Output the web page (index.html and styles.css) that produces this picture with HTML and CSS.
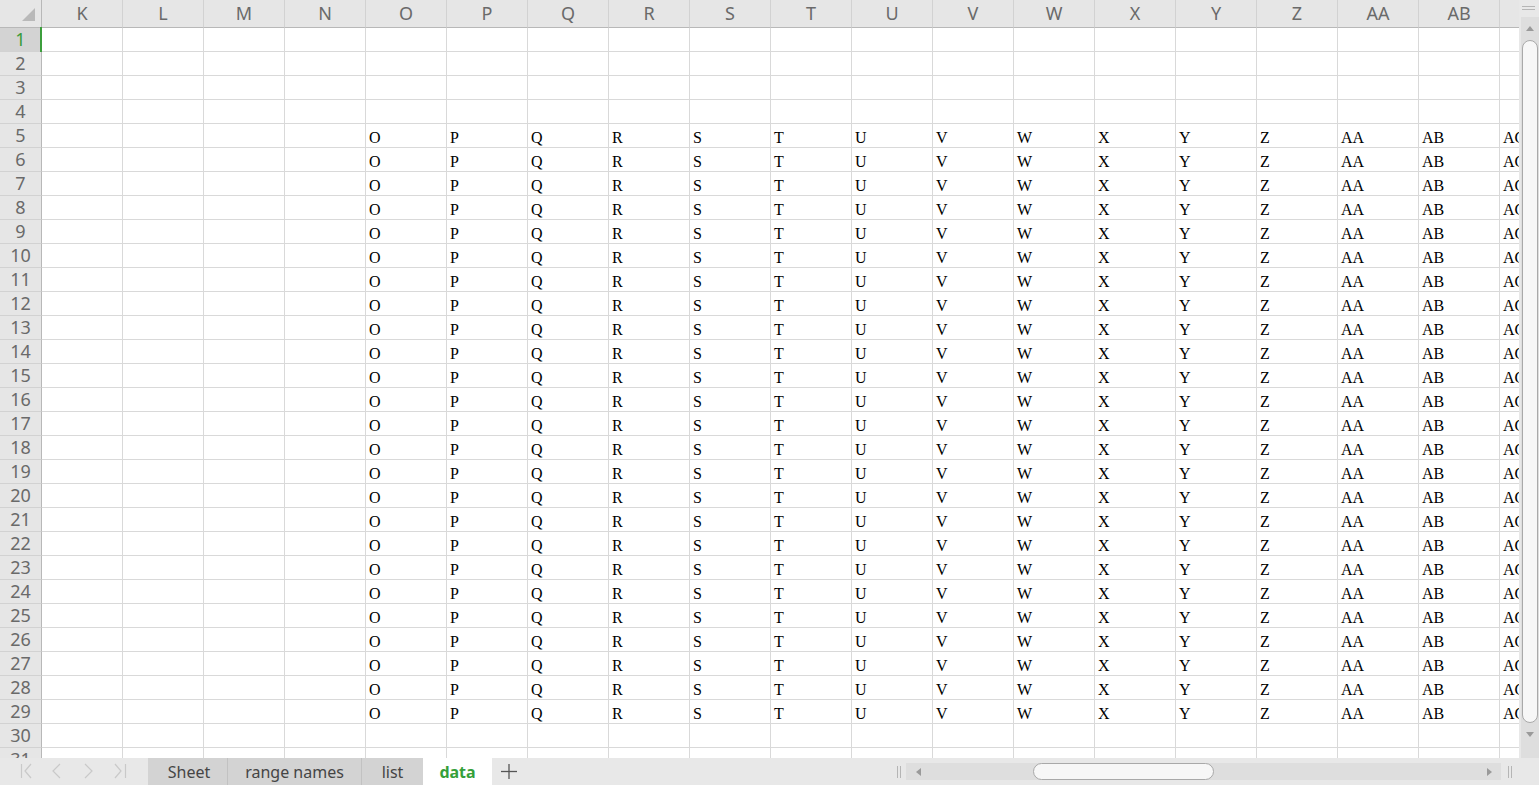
FILE: index.html
```html
<!DOCTYPE html>
<html>
<head>
<meta charset="utf-8">
<link rel="stylesheet" href="styles.css">
</head>
<body>
<div class="app">
  <div class="main">
    <div class="sheet">
      <div class="grid">
        <div class="corner"><svg width="41" height="27" viewBox="0 0 41 27"><polygon points="35,8 35,21 22,21" fill="#b9b9b9"/></svg></div>
        <div class="ch">K</div><div class="ch">L</div><div class="ch">M</div><div class="ch">N</div><div class="ch">O</div><div class="ch">P</div><div class="ch">Q</div><div class="ch">R</div><div class="ch">S</div><div class="ch">T</div><div class="ch">U</div><div class="ch">V</div><div class="ch">W</div><div class="ch">X</div><div class="ch">Y</div><div class="ch">Z</div><div class="ch">AA</div><div class="ch">AB</div><div class="ch">AC</div>
        <div class="rh act">1</div><div></div><div></div><div></div><div></div><div></div><div></div><div></div><div></div><div></div><div></div><div></div><div></div><div></div><div></div><div></div><div></div><div></div><div></div><div></div>
        <div class="rh">2</div><div></div><div></div><div></div><div></div><div></div><div></div><div></div><div></div><div></div><div></div><div></div><div></div><div></div><div></div><div></div><div></div><div></div><div></div><div></div>
        <div class="rh">3</div><div></div><div></div><div></div><div></div><div></div><div></div><div></div><div></div><div></div><div></div><div></div><div></div><div></div><div></div><div></div><div></div><div></div><div></div><div></div>
        <div class="rh">4</div><div></div><div></div><div></div><div></div><div></div><div></div><div></div><div></div><div></div><div></div><div></div><div></div><div></div><div></div><div></div><div></div><div></div><div></div><div></div>
        <div class="rh">5</div><div></div><div></div><div></div><div></div><div>O</div><div>P</div><div>Q</div><div>R</div><div>S</div><div>T</div><div>U</div><div>V</div><div>W</div><div>X</div><div>Y</div><div>Z</div><div>AA</div><div>AB</div><div>AC</div>
        <div class="rh">6</div><div></div><div></div><div></div><div></div><div>O</div><div>P</div><div>Q</div><div>R</div><div>S</div><div>T</div><div>U</div><div>V</div><div>W</div><div>X</div><div>Y</div><div>Z</div><div>AA</div><div>AB</div><div>AC</div>
        <div class="rh">7</div><div></div><div></div><div></div><div></div><div>O</div><div>P</div><div>Q</div><div>R</div><div>S</div><div>T</div><div>U</div><div>V</div><div>W</div><div>X</div><div>Y</div><div>Z</div><div>AA</div><div>AB</div><div>AC</div>
        <div class="rh">8</div><div></div><div></div><div></div><div></div><div>O</div><div>P</div><div>Q</div><div>R</div><div>S</div><div>T</div><div>U</div><div>V</div><div>W</div><div>X</div><div>Y</div><div>Z</div><div>AA</div><div>AB</div><div>AC</div>
        <div class="rh">9</div><div></div><div></div><div></div><div></div><div>O</div><div>P</div><div>Q</div><div>R</div><div>S</div><div>T</div><div>U</div><div>V</div><div>W</div><div>X</div><div>Y</div><div>Z</div><div>AA</div><div>AB</div><div>AC</div>
        <div class="rh">10</div><div></div><div></div><div></div><div></div><div>O</div><div>P</div><div>Q</div><div>R</div><div>S</div><div>T</div><div>U</div><div>V</div><div>W</div><div>X</div><div>Y</div><div>Z</div><div>AA</div><div>AB</div><div>AC</div>
        <div class="rh">11</div><div></div><div></div><div></div><div></div><div>O</div><div>P</div><div>Q</div><div>R</div><div>S</div><div>T</div><div>U</div><div>V</div><div>W</div><div>X</div><div>Y</div><div>Z</div><div>AA</div><div>AB</div><div>AC</div>
        <div class="rh">12</div><div></div><div></div><div></div><div></div><div>O</div><div>P</div><div>Q</div><div>R</div><div>S</div><div>T</div><div>U</div><div>V</div><div>W</div><div>X</div><div>Y</div><div>Z</div><div>AA</div><div>AB</div><div>AC</div>
        <div class="rh">13</div><div></div><div></div><div></div><div></div><div>O</div><div>P</div><div>Q</div><div>R</div><div>S</div><div>T</div><div>U</div><div>V</div><div>W</div><div>X</div><div>Y</div><div>Z</div><div>AA</div><div>AB</div><div>AC</div>
        <div class="rh">14</div><div></div><div></div><div></div><div></div><div>O</div><div>P</div><div>Q</div><div>R</div><div>S</div><div>T</div><div>U</div><div>V</div><div>W</div><div>X</div><div>Y</div><div>Z</div><div>AA</div><div>AB</div><div>AC</div>
        <div class="rh">15</div><div></div><div></div><div></div><div></div><div>O</div><div>P</div><div>Q</div><div>R</div><div>S</div><div>T</div><div>U</div><div>V</div><div>W</div><div>X</div><div>Y</div><div>Z</div><div>AA</div><div>AB</div><div>AC</div>
        <div class="rh">16</div><div></div><div></div><div></div><div></div><div>O</div><div>P</div><div>Q</div><div>R</div><div>S</div><div>T</div><div>U</div><div>V</div><div>W</div><div>X</div><div>Y</div><div>Z</div><div>AA</div><div>AB</div><div>AC</div>
        <div class="rh">17</div><div></div><div></div><div></div><div></div><div>O</div><div>P</div><div>Q</div><div>R</div><div>S</div><div>T</div><div>U</div><div>V</div><div>W</div><div>X</div><div>Y</div><div>Z</div><div>AA</div><div>AB</div><div>AC</div>
        <div class="rh">18</div><div></div><div></div><div></div><div></div><div>O</div><div>P</div><div>Q</div><div>R</div><div>S</div><div>T</div><div>U</div><div>V</div><div>W</div><div>X</div><div>Y</div><div>Z</div><div>AA</div><div>AB</div><div>AC</div>
        <div class="rh">19</div><div></div><div></div><div></div><div></div><div>O</div><div>P</div><div>Q</div><div>R</div><div>S</div><div>T</div><div>U</div><div>V</div><div>W</div><div>X</div><div>Y</div><div>Z</div><div>AA</div><div>AB</div><div>AC</div>
        <div class="rh">20</div><div></div><div></div><div></div><div></div><div>O</div><div>P</div><div>Q</div><div>R</div><div>S</div><div>T</div><div>U</div><div>V</div><div>W</div><div>X</div><div>Y</div><div>Z</div><div>AA</div><div>AB</div><div>AC</div>
        <div class="rh">21</div><div></div><div></div><div></div><div></div><div>O</div><div>P</div><div>Q</div><div>R</div><div>S</div><div>T</div><div>U</div><div>V</div><div>W</div><div>X</div><div>Y</div><div>Z</div><div>AA</div><div>AB</div><div>AC</div>
        <div class="rh">22</div><div></div><div></div><div></div><div></div><div>O</div><div>P</div><div>Q</div><div>R</div><div>S</div><div>T</div><div>U</div><div>V</div><div>W</div><div>X</div><div>Y</div><div>Z</div><div>AA</div><div>AB</div><div>AC</div>
        <div class="rh">23</div><div></div><div></div><div></div><div></div><div>O</div><div>P</div><div>Q</div><div>R</div><div>S</div><div>T</div><div>U</div><div>V</div><div>W</div><div>X</div><div>Y</div><div>Z</div><div>AA</div><div>AB</div><div>AC</div>
        <div class="rh">24</div><div></div><div></div><div></div><div></div><div>O</div><div>P</div><div>Q</div><div>R</div><div>S</div><div>T</div><div>U</div><div>V</div><div>W</div><div>X</div><div>Y</div><div>Z</div><div>AA</div><div>AB</div><div>AC</div>
        <div class="rh">25</div><div></div><div></div><div></div><div></div><div>O</div><div>P</div><div>Q</div><div>R</div><div>S</div><div>T</div><div>U</div><div>V</div><div>W</div><div>X</div><div>Y</div><div>Z</div><div>AA</div><div>AB</div><div>AC</div>
        <div class="rh">26</div><div></div><div></div><div></div><div></div><div>O</div><div>P</div><div>Q</div><div>R</div><div>S</div><div>T</div><div>U</div><div>V</div><div>W</div><div>X</div><div>Y</div><div>Z</div><div>AA</div><div>AB</div><div>AC</div>
        <div class="rh">27</div><div></div><div></div><div></div><div></div><div>O</div><div>P</div><div>Q</div><div>R</div><div>S</div><div>T</div><div>U</div><div>V</div><div>W</div><div>X</div><div>Y</div><div>Z</div><div>AA</div><div>AB</div><div>AC</div>
        <div class="rh">28</div><div></div><div></div><div></div><div></div><div>O</div><div>P</div><div>Q</div><div>R</div><div>S</div><div>T</div><div>U</div><div>V</div><div>W</div><div>X</div><div>Y</div><div>Z</div><div>AA</div><div>AB</div><div>AC</div>
        <div class="rh">29</div><div></div><div></div><div></div><div></div><div>O</div><div>P</div><div>Q</div><div>R</div><div>S</div><div>T</div><div>U</div><div>V</div><div>W</div><div>X</div><div>Y</div><div>Z</div><div>AA</div><div>AB</div><div>AC</div>
        <div class="rh">30</div><div></div><div></div><div></div><div></div><div></div><div></div><div></div><div></div><div></div><div></div><div></div><div></div><div></div><div></div><div></div><div></div><div></div><div></div><div></div>
        <div class="rh">31</div><div></div><div></div><div></div><div></div><div></div><div></div><div></div><div></div><div></div><div></div><div></div><div></div><div></div><div></div><div></div><div></div><div></div><div></div><div></div>
      </div>
      <div class="selmark"></div>
    </div>
    <div class="vscroll">
      <div class="vgrip"></div>
      <div class="vtrack">
        <div class="varrow"><svg width="8" height="5" viewBox="0 0 8 5"><polygon points="0,5 8,5 4,0" fill="#9a9a9a"/></svg></div>
        <div class="vthumb"></div>
        <div class="varrow"><svg width="8" height="5" viewBox="0 0 8 5"><polygon points="0,0 8,0 4,5" fill="#9a9a9a"/></svg></div>
      </div>
    </div>
  </div>
  <div class="tabbar">
    <div class="nav">
      <svg width="148" height="27" viewBox="0 0 148 27">
        <g fill="none" stroke="#c9c9c9" stroke-width="1.2">
          <line x1="21.5" y1="6" x2="21.5" y2="20"/>
          <polyline points="31,6 25,13 31,20"/>
          <polyline points="60,6 53,13 60,20"/>
          <polyline points="85,6 92,13 85,20"/>
          <polyline points="115,6 121,13 115,20"/>
          <line x1="125.5" y1="6" x2="125.5" y2="20"/>
        </g>
      </svg>
    </div>
    <div class="tab t-sheet">Sheet</div>
    <div class="tab t-range">range names</div>
    <div class="tab t-list">list</div>
    <div class="tab t-data active">data</div>
    <div class="addtab"><svg width="18" height="18" viewBox="0 0 18 18"><g stroke="#555" stroke-width="1.3"><line x1="1" y1="8.5" x2="17" y2="8.5"/><line x1="9" y1="1" x2="9" y2="16"/></g></svg></div>
    <div class="spacer"></div>
    <div class="hscroll">
      <div class="hgrip"></div>
      <div class="htrack">
        <div class="harrow"><svg width="5" height="8" viewBox="0 0 5 8"><polygon points="5,0 5,8 0,4" fill="#9a9a9a"/></svg></div>
        <div class="hthumb"></div>
        <div class="spacer"></div>
        <div class="harrow"><svg width="5" height="8" viewBox="0 0 5 8"><polygon points="0,0 0,8 5,4" fill="#9a9a9a"/></svg></div>
      </div>
      <div class="hgrip"></div>
    </div>
  </div>
</div>
</body>
</html>
```

FILE: styles.css
```css
html, body {
  margin: 0;
  padding: 0;
  background: #ffffff;
}

.app {
  width: 1539px;
  height: 785px;
  display: flex;
  flex-direction: column;
  overflow: hidden;
}

.main {
  display: flex;
  height: 758px;
  flex: none;
}

.sheet {
  position: relative;
  width: 1519px;
  height: 758px;
  overflow: hidden;
  flex: none;
}

.grid {
  display: grid;
  grid-template-columns: 42px repeat(19, 81px);
  grid-template-rows: 28px;
  grid-auto-rows: 24px;
  width: 1581px;
}

.grid > div {
  box-sizing: border-box;
  border-right: 1px solid #d9d9d9;
  border-bottom: 1px solid #d9d9d9;
  padding: 4px 0 0 3px;
  line-height: 20px;
  font-family: "Liberation Serif", "Times New Roman", serif;
  font-size: 16px;
  color: #000;
  white-space: nowrap;
  overflow: hidden;
}

.grid > .corner {
  padding: 0;
  background: #e6e6e6;
  border-right: 1px solid #b8b8b8;
  border-bottom: 1px solid #b8b8b8;
}

.corner svg {
  display: block;
}

.grid > .ch {
  padding: 0;
  background: #e6e6e6;
  border-right: 1px solid #d2d2d2;
  border-bottom: 1px solid #b8b8b8;
  text-align: center;
  font-family: "Noto Sans", "Open Sans", sans-serif;
  font-size: 18px;
  line-height: 27px;
  color: #6a6a6a;
}

.grid > .rh {
  padding: 0;
  background: #e6e6e6;
  border-right: 1px solid #b8b8b8;
  border-bottom: 1px solid #d2d2d2;
  text-align: center;
  font-family: "Noto Sans", "Open Sans", sans-serif;
  font-size: 18px;
  line-height: 23px;
  color: #6a6a6a;
}

.grid > .rh.act {
  background: #d3d3d3;
  color: #3a9b3a;
}

.selmark {
  position: absolute;
  left: 40px;
  top: 27px;
  width: 2px;
  height: 25px;
  background: #3c9e3c;
}

/* vertical scrollbar */
.vscroll {
  width: 20px;
  flex: none;
  background: #e8e8e8;
  display: flex;
  flex-direction: column;
}

.vgrip {
  height: 17px;
  flex: none;
  position: relative;
}

.vgrip::before,
.vgrip::after {
  content: "";
  position: absolute;
  left: 3px;
  width: 13px;
  height: 1px;
  background: #b5b5b5;
}

.vgrip::before { top: 6px; }
.vgrip::after { top: 9px; }

.vtrack {
  flex: 1;
  margin-left: 2px;
  background: #dedede;
  display: flex;
  flex-direction: column;
  align-items: center;
}

.varrow {
  height: 23px;
  display: flex;
  align-items: center;
  justify-content: center;
  flex: none;
}

.varrow svg { display: block; }

.vthumb {
  width: 16px;
  box-sizing: border-box;
  height: 683px;
  background: #f7f7f7;
  border: 1px solid #a9a9a9;
  border-radius: 8px;
  flex: none;
}

/* bottom tab bar */
.tabbar {
  height: 27px;
  flex: none;
  display: flex;
  background: #e8e8e8;
  font-family: "Noto Sans", "Open Sans", sans-serif;
  font-size: 16px;
  color: #454545;
}

.nav {
  width: 148px;
  flex: none;
}

.nav svg { display: block; }

.tab {
  flex: none;
  box-sizing: border-box;
  height: 27px;
  line-height: 28px;
  text-align: center;
  background: #d3d3d3;
  border-right: 1px solid #c2c2c2;
}

.t-sheet { width: 80px; padding-left: 3px; }
.t-range { width: 134px; }
.t-list { width: 61px; border-right: none; }
.t-data { width: 69px; }

.tab.active {
  background: #ffffff;
  color: #35a03a;
  font-weight: bold;
  border-right: none;
}

.addtab {
  width: 34px;
  flex: none;
  display: flex;
  align-items: center;
  padding-left: 8px;
  box-sizing: border-box;
}

.addtab svg { display: block; }

.spacer { flex: 1; }

.hscroll {
  width: 646px;
  flex: none;
  display: flex;
  align-items: center;
}

.hgrip {
  width: 4px;
  height: 12px;
  margin-left: 4px;
  box-sizing: border-box;
  border-left: 1px solid #b5b5b5;
  border-right: 1px solid #b5b5b5;
  flex: none;
}

.htrack {
  width: 595px;
  height: 17px;
  margin-left: 5px;
  margin-right: 3px;
  background: #dedede;
  display: flex;
  align-items: center;
  flex: none;
}

.harrow {
  width: 24px;
  height: 17px;
  display: flex;
  align-items: center;
  justify-content: center;
  flex: none;
}

.harrow svg { display: block; }

.hthumb {
  width: 181px;
  height: 17px;
  margin-left: 103px;
  box-sizing: border-box;
  background: #f7f7f7;
  border: 1px solid #a9a9a9;
  border-radius: 9px;
  flex: none;
}
```
